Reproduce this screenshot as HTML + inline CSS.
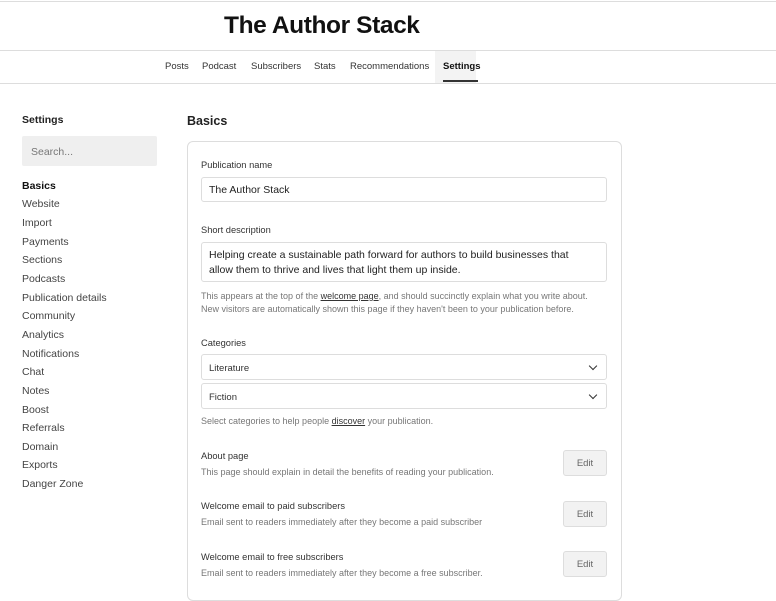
<!DOCTYPE html>
<html><head><meta charset="utf-8"><style>
*{margin:0;padding:0;box-sizing:border-box}
body{width:776px;height:586px;overflow:hidden;background:#fff;font-family:"Liberation Sans",sans-serif;color:#222;position:relative}
.abs{position:absolute;white-space:nowrap}
.logo{left:224px;top:12px;font-size:24.5px;font-weight:bold;letter-spacing:-0.4px;color:#111}
.nav{font-size:9.5px;color:#333;top:61px}
.side{left:22px;font-size:10.5px;color:#444}
.lbl{left:201px;font-size:9.3px;color:#333}
.help{left:201px;font-size:9px;color:#777}
.box{position:absolute;left:201px;width:406px;border:1px solid #ddd;border-radius:3px;background:#fff}
.txt{font-size:10.5px;color:#222}
.btn{position:absolute;left:563px;width:44px;height:26px;border:1px solid #ddd;border-radius:3px;background:#f2f2f2;font-size:9.5px;color:#666;text-align:center;line-height:26px}
.chev{position:absolute;right:10px;top:8px;width:6px;height:6px;border-right:1.6px solid #333;border-bottom:1.6px solid #333;transform:rotate(45deg)}
u{color:#333}
</style></head><body>
<div style="position:absolute;left:0;top:1px;width:776px;height:1px;background:#ddd"></div>
<div class="abs logo">The Author Stack</div>
<div style="position:absolute;left:0;top:50px;width:776px;height:1px;background:#ddd"></div>
<div style="position:absolute;left:435px;top:51px;width:41px;height:32px;background:#f3f3f3"></div>
<div style="position:absolute;left:443px;top:80px;width:35px;height:2px;background:#333"></div>
<div style="position:absolute;left:0;top:83px;width:776px;height:1px;background:#ddd"></div>
<div class="abs nav" style="left:165px">Posts</div>
<div class="abs nav" style="left:202px">Podcast</div>
<div class="abs nav" style="left:251px">Subscribers</div>
<div class="abs nav" style="left:314px">Stats</div>
<div class="abs nav" style="left:350px">Recommendations</div>
<div class="abs nav" style="left:443px;color:#111;font-weight:bold">Settings</div>

<div class="abs side" style="top:114px;font-weight:bold;color:#222">Settings</div>
<div style="position:absolute;left:22px;top:136px;width:135px;height:30px;background:#efefef;border-radius:2px"></div>
<div class="abs side" style="left:31px;top:146px;color:#777">Search...</div>
<div class="abs side" style="top:180px;color:#111;font-weight:bold">Basics</div>
<div class="abs side" style="top:198px">Website</div>
<div class="abs side" style="top:217px">Import</div>
<div class="abs side" style="top:236px">Payments</div>
<div class="abs side" style="top:254px">Sections</div>
<div class="abs side" style="top:273px">Podcasts</div>
<div class="abs side" style="top:292px">Publication details</div>
<div class="abs side" style="top:310px">Community</div>
<div class="abs side" style="top:329px">Analytics</div>
<div class="abs side" style="top:348px">Notifications</div>
<div class="abs side" style="top:366px">Chat</div>
<div class="abs side" style="top:385px">Notes</div>
<div class="abs side" style="top:404px">Boost</div>
<div class="abs side" style="top:422px">Referrals</div>
<div class="abs side" style="top:441px">Domain</div>
<div class="abs side" style="top:459px">Exports</div>
<div class="abs side" style="top:478px">Danger Zone</div>

<div class="abs" style="left:187px;top:114px;font-size:12.5px;font-weight:bold;color:#222">Basics</div>
<div style="position:absolute;left:187px;top:141px;width:435px;height:460px;border:1px solid #ddd;border-radius:6px"></div>

<div class="abs lbl" style="top:160px">Publication name</div>
<div class="box" style="top:177px;height:25px"><div class="abs txt" style="left:7px;top:6px">The Author Stack</div></div>
<div class="abs lbl" style="top:225px">Short description</div>
<div class="box" style="top:242px;height:40px"><div class="abs txt" style="left:7px;top:5px;line-height:15px">Helping create a sustainable path forward for authors to build businesses that<br>allow them to thrive and lives that light them up inside.</div></div>
<div class="abs help" style="top:290px;line-height:12.5px">This appears at the top of the <u>welcome page</u>, and should succinctly explain what you write about.<br>New visitors are automatically shown this page if they haven't been to your publication before.</div>

<div class="abs lbl" style="top:338px">Categories</div>
<div class="box" style="top:354px;height:26px"><div class="abs" style="left:7px;top:8px;font-size:9.5px;color:#333">Literature</div><div class="chev"></div></div>
<div class="box" style="top:383px;height:26px"><div class="abs" style="left:7px;top:8px;font-size:9.5px;color:#333">Fiction</div><div class="chev"></div></div>
<div class="abs help" style="top:416px">Select categories to help people <u>discover</u> your publication.</div>

<div class="abs lbl" style="top:451px">About page</div>
<div class="abs help" style="top:467px">This page should explain in detail the benefits of reading your publication.</div>
<div class="btn" style="top:450px">Edit</div>
<div class="abs lbl" style="top:501px">Welcome email to paid subscribers</div>
<div class="abs help" style="top:517px">Email sent to readers immediately after they become a paid subscriber</div>
<div class="btn" style="top:501px">Edit</div>
<div class="abs lbl" style="top:552px">Welcome email to free subscribers</div>
<div class="abs help" style="top:568px">Email sent to readers immediately after they become a free subscriber.</div>
<div class="btn" style="top:551px">Edit</div>
</body></html>
